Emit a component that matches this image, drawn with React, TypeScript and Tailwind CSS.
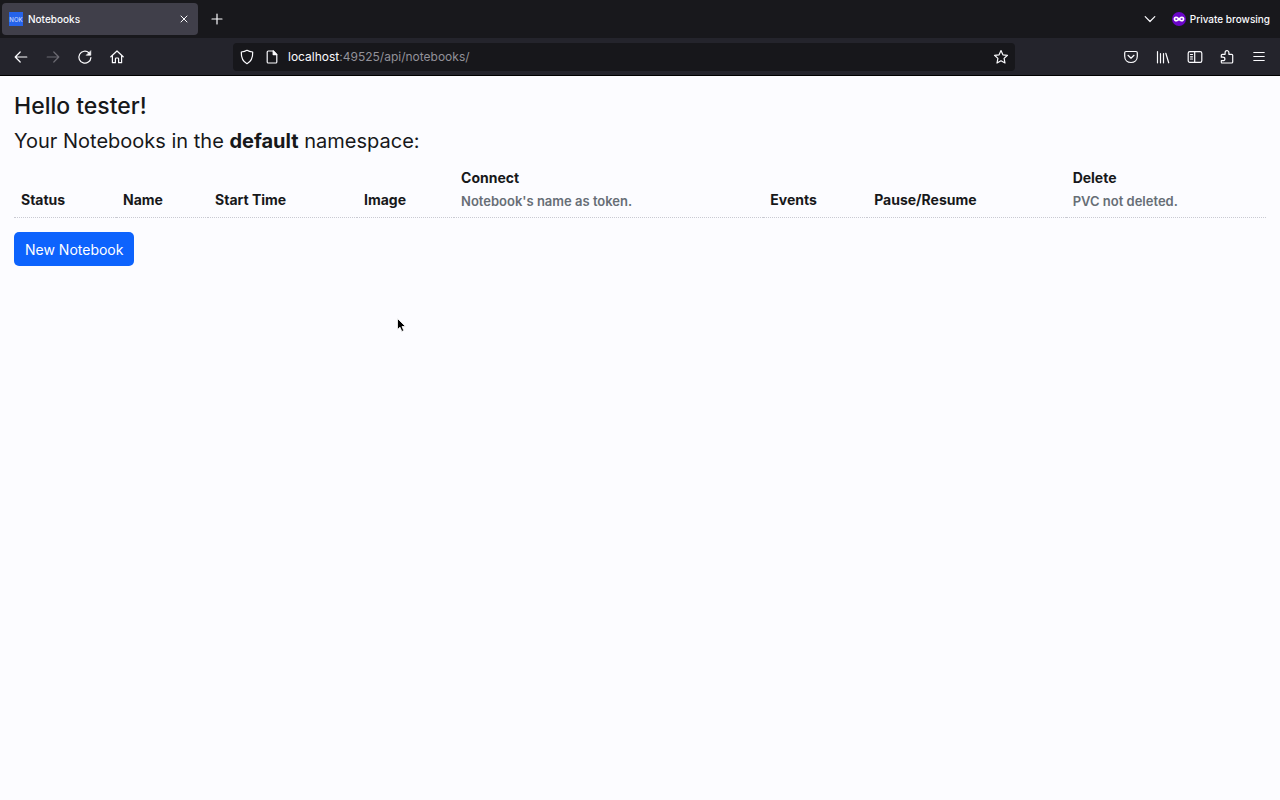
import type { ReactNode } from "react";

type Column = {
    title: string;
    note?: string;
    width: string;
}

const columns: Column[] = [
    { title: "Status", width: "w-[8.15%]" },
    { title: "Name", width: "w-[7.35%]" },
    { title: "Start Time", width: "w-[11.9%]" },
    { title: "Image", width: "w-[7.75%]" },
    { title: "Connect", note: "Notebook's name as token.", width: "w-[24.7%]" },
    { title: "Events", width: "w-[8.3%]" },
    { title: "Pause/Resume", width: "w-[15.85%]" },
    { title: "Delete", note: "PVC not deleted.", width: "w-[16%]" },
];

//all toolbar icons share a 16px grid
const Icon = ({ children }: { children: ReactNode }) => (
    <svg className="size-4 shrink-0" viewBox="0 0 16 16" fill="none" stroke="currentColor" strokeWidth="1.2" strokeLinecap="round" strokeLinejoin="round" aria-hidden="true">
        {children}
    </svg>
)

const IconButton = ({ label, disabled, children }: { label: string, disabled?: boolean, children: ReactNode }) => (
    <button type="button" aria-label={label} disabled={disabled} className="flex size-4 items-center justify-center disabled:text-[#6b6a72]">
        <Icon>{children}</Icon>
    </button>
)

const TabStrip = () => (
    <div className="flex h-[38px] items-center bg-[#18181c] pr-2.5 pl-0.5 text-[10px] font-medium">
        {/* Active tab */}
        <div className="flex h-8 w-[196px] items-center rounded bg-[#403f4a] pr-1.5 pl-[7px]">
            <span className="flex size-3.5 items-center justify-center bg-[#2563eb] text-[6px] text-[#c3d6ff]">NOK</span>
            <span className="ml-[5px] grow">Notebooks</span>
            <IconButton label="Close tab">
                <path d="M5 5l6 6M11 5l-6 6" strokeWidth="1" />
            </IconButton>
        </div>
        <div className="ml-[11px] flex grow">
            <IconButton label="New tab">
                <path d="M8 3v10M3 8h10" />
            </IconButton>
        </div>
        <IconButton label="List all tabs">
            <path d="M3.200 5.700l4.800 4.800 4.800-4.800" />
        </IconButton>

        {/* Private window badge */}
        <div className="ml-3.5 flex items-center gap-1">
            <svg className="size-3.5" viewBox="0 0 14 14" aria-hidden="true">
                <circle cx="7" cy="7" r="7" fill="#6a05c8" />
                <path d="M7 5.900C6 5 5 4.500 4 4.500 2.500 4.500 1.600 5.500 1.600 7S2.700 9.600 4.200 9.600C5.500 9.600 6.200 8.400 7 8.400S8.500 9.600 9.800 9.600C11.300 9.600 12.400 8.500 12.400 7S11.500 4.500 10 4.500C9 4.500 8 5 7 5.900Z" fill="#fff" />
                <ellipse cx="4.300" cy="7.100" rx="1.200" ry="0.800" fill="#6a05c8" />
                <ellipse cx="9.700" cy="7.100" rx="1.200" ry="0.800" fill="#6a05c8" />
            </svg>
            <span>Private browsing</span>
        </div>
    </div>
)

const NavBar = () => (
    <div className="flex h-[38px] items-center border-b border-black bg-[#24242c] px-[13px]">
        <div className="flex w-[220px] gap-4">
            <IconButton label="Back">
                <path d="M2.200 8h11.600M7.200 3L2.200 8l5 5" />
            </IconButton>
            <IconButton label="Forward" disabled>
                <path d="M2.200 8h11.600M8.800 3l5 5-5 5" />
            </IconButton>
            <IconButton label="Reload">
                <path d="M13.900 8.600A6 6 0 1 1 11.900 3.700" />
                <path d="M13.800 2v4.300H9.500z" fill="currentColor" strokeWidth="0.600" />
            </IconButton>
            <IconButton label="Home">
                <path d="M1.800 7.800L8 2l6.200 5.800M3.400 6.600v7.100h3V9.800c0-.5.3-.8.800-.8h1.600c.5 0 .8.300.8.800v3.900h3V6.600" />
            </IconButton>
        </div>

        {/* Address bar */}
        <div className="flex h-7 grow items-center rounded bg-[#17171b] px-1.5">
            <IconButton label="Tracking protection">
                <path d="M8 1.300c1.600 1 3.500 1.500 5.700 1.700.2 5.500-1.300 9.400-5.700 11.700C3.600 12.400 2.100 8.500 2.300 3 4.500 2.800 6.400 2.300 8 1.300z" />
            </IconButton>
            <div className="ml-[9px] flex">
                <IconButton label="Site information">
                    <path d="M9.200 2H4.300c-.7 0-1.100.4-1.100 1.100v9.800c0 .7.4 1.100 1.100 1.100h7.400c.7 0 1.100-.4 1.100-1.100V5.600z" />
                    <path d="M9.200 2v3.600h3.600z" fill="currentColor" />
                </IconButton>
            </div>
            <a href="#" className="ml-2 grow text-[12px] text-[#929199]">
                <span className="text-[#fbfbfe]">localhost</span>:49525/api/notebooks/
            </a>
            <IconButton label="Bookmark this page">
                <path d="M8 1.600l1.900 4.200 4.600.5-3.400 3.100.9 4.600L8 11.800 4 14l.9-4.600L1.500 6.300l4.600-.5z" />
            </IconButton>
        </div>

        <div className="flex w-[252px] justify-end gap-4">
            <IconButton label="Save to Pocket">
                <path d="M3 2.500h10c.8 0 1.300.5 1.300 1.300v3.500c0 3.700-2.700 6.200-6.300 6.200S1.700 11 1.700 7.300V3.800c0-.8.500-1.300 1.300-1.300z" />
                <path d="M5 6.300l3 2.900 3-2.900" />
            </IconButton>
            <IconButton label="Library">
                <path d="M2.500 2.500v11.300M5.500 4.500v9.300M8.500 4.500v9.300M10.800 4.300l2.900 9.500" />
            </IconButton>
            <IconButton label="Sidebars">
                <rect x="1.200" y="2.700" width="13.600" height="10.600" rx="1.600" />
                <path d="M7.700 2.700v10.600M3.500 5.500h2M3.500 7.800h2M3.500 10h2" />
            </IconButton>
            <IconButton label="Extensions">
                <path d="M2.900 14h9.800c.6 0 1-.4 1-1V6.300c0-.6-.4-1-1-1H9.900V3.700C9.900 2.600 9.100 1.700 8 1.700s-1.900.9-1.900 2v1.600H3.300c-.6 0-1 .4-1 1v1.900h1.500c1.300 0 2.100.7 2.100 1.700s-.8 1.800-2.100 1.800H2.300V13c0 .6.200 1 .6 1z" />
            </IconButton>
            <IconButton label="Menu">
                <path d="M2.800 3.500h10.400M2.800 7.500h10.400M2.800 11.500h10.400" />
            </IconButton>
        </div>
    </div>
)

const NotebookTable = () => (
    <table className="mt-1 w-full table-fixed text-left text-[14px] leading-6">
        <thead>
            <tr className="border-b border-dotted border-[#c9cad2]">
                {columns.map((column) => (
                    <th key={column.title} scope="col" className={`${column.width} px-[7px] py-[5px] align-bottom font-bold whitespace-nowrap`}>
                        {column.title}
                        {column.note && <small className="block text-[13px] leading-[22px] font-semibold text-[#676e76]">{column.note}</small>}
                    </th>
                ))}
            </tr>
        </thead>
    </table>
)

//pointer resting over the page
const Pointer = () => (
    <svg className="pointer-events-none absolute top-[317px] left-[396px] h-4 w-3" viewBox="0 0 12 16" aria-hidden="true">
        <path d="M1.500 1.500v11l2.500-2.300 1.800 4.300 2-.9-1.800-4.100h3.500z" fill="#000" stroke="#fff" strokeWidth="0.800" />
    </svg>
)

const App = () => {
    return (
        <div className="relative min-h-screen bg-[#fcfcff] font-['Inter',sans-serif] text-[#17181a]">
            <header className="text-[#fbfbfe]">
                <TabStrip />
                <NavBar />
            </header>
            <main className="px-3.5 pt-3.5">
                <h1 className="text-[23px] leading-8 font-medium">Hello tester!</h1>
                <h2 className="mt-[3px] text-[20px] leading-8">
                    Your Notebooks in the <strong className="font-bold">default</strong> namespace:
                </h2>
                <NotebookTable />
                <button type="button" className="mt-3.5 h-[34px] rounded-[5px] bg-[#0d63fd] px-[11px] text-[14px] text-white">New Notebook</button>
            </main>
            <Pointer />
        </div>
    )
}

export default App
